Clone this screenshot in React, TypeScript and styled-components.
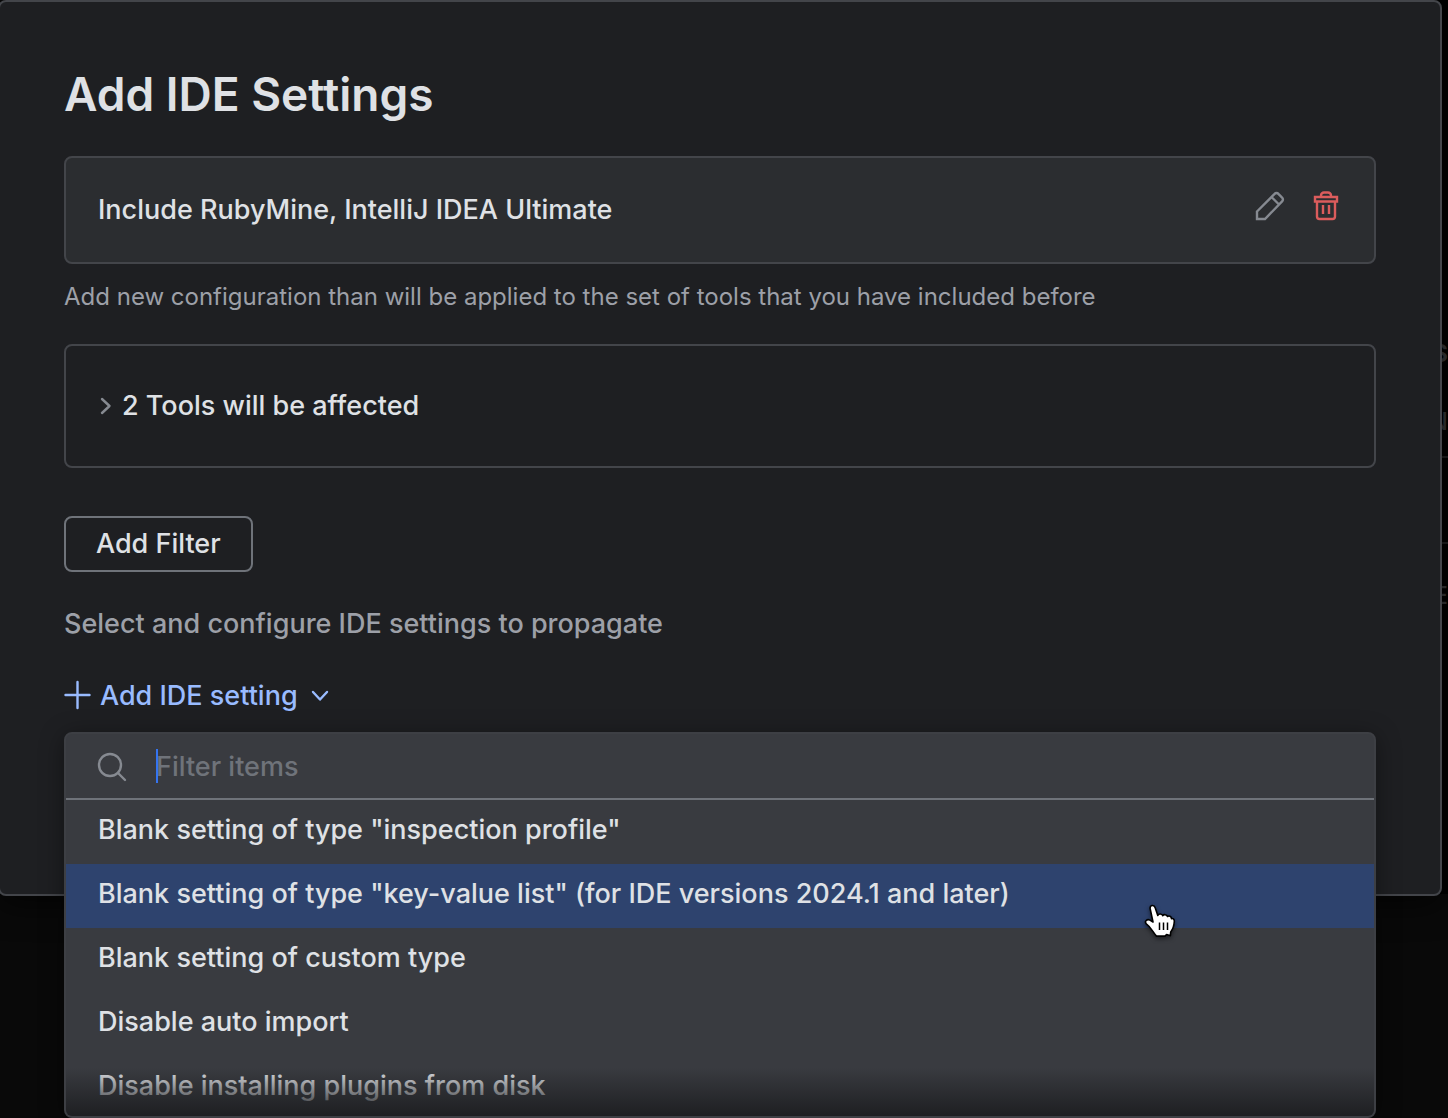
import React, { useState } from "react";
import styled, { createGlobalStyle } from "styled-components";

const GlobalStyle = createGlobalStyle`
  *, *::before, *::after { box-sizing: border-box; }
  html, body, #root { height: 100%; }
  body {
    margin: 0;
    background: #090909;
    color: #dfe1e5;
    font-family: Inter, "Liberation Sans", sans-serif;
    font-size: 27px;
    font-weight: 500;
    line-height: 40px;
    overflow: hidden;
  }
  button, input { font: inherit; color: inherit; }
`;

const Screen = styled.div`
  position: relative;
  min-height: 100%;
  overflow: hidden;
`;

const Behind = styled.div`
  position: absolute;
  inset: 0 0 auto auto;
  width: 18px;
  height: 894px;
  background: #000000;
  color: #343638;
  display: flex;
  flex-direction: column;
  align-items: flex-end;
  padding-top: 334px;
  overflow: hidden;
`;

const BehindLine = styled.div<{ $weight: number; $height: number }>`
  height: ${(p) => p.$height}px;
  font-size: 24px;
  font-weight: ${(p) => p.$weight};
  line-height: 40px;
`;

const BehindRule = styled.div<{ $height: number }>`
  width: 100%;
  height: ${(p) => p.$height}px;
  border-top: 2px solid #1e1f20;
`;

const Dialog = styled.main`
  position: relative;
  margin: 0 6px 0 -2px;
  height: 896px;
  padding: 60px 64px 0;
  background: #1e1f22;
  border: 2px solid #43454a;
  border-radius: 8px;
  box-shadow: 0 8px 32px rgba(0, 0, 0, 0.6);
`;

const Title = styled.h1`
  margin: 0;
  font-size: 46px;
  line-height: 64px;
  font-weight: 600;
`;

const FilterCard = styled.section`
  display: flex;
  align-items: center;
  justify-content: space-between;
  height: 108px;
  margin-top: 30px;
  padding: 0 32px;
  background: #2b2d30;
  border: 2px solid #43454a;
  border-radius: 8px;
`;

const Actions = styled.div`
  display: flex;
  gap: 24px;
  padding-bottom: 8px;
`;

const IconButton = styled.button<{ $color: string }>`
  display: flex;
  padding: 0;
  border: 0;
  background: none;
  color: ${(p) => p.$color};
`;

const Hint = styled.p`
  margin: 16px 0 0;
  color: #9da0a8;
  font-size: 24px;
  font-weight: 400;
  line-height: 34px;
`;

const ToolsCard = styled.section`
  display: flex;
  align-items: center;
  height: 124px;
  margin-top: 30px;
  padding: 0 32px;
  border: 2px solid #43454a;
  border-radius: 8px;
`;

const Disclosure = styled.button`
  display: flex;
  align-items: center;
  gap: 8px;
  padding: 0;
  border: 0;
  background: none;
`;

const OutlineButton = styled.button`
  display: block;
  height: 56px;
  margin-top: 48px;
  padding: 0 30px;
  border: 2px solid #6f737a;
  border-radius: 8px;
  background: none;
  line-height: 52px;
`;

const Label = styled.p`
  margin: 32px 0;
  color: #9da0a8;
`;

const LinkButton = styled.button`
  display: flex;
  align-items: center;
  gap: 8px;
  padding: 0;
  border: 0;
  background: none;
  color: #99bbff;
`;

const MenuAnchor = styled.div`
  position: relative;
`;

const Menu = styled.div`
  position: absolute;
  top: 100%;
  left: 0;
  right: 0;
  margin-top: 16px;
  height: 386px;
  overflow: hidden;
  background: #393b40;
  border: 2px solid #3d3f44;
  border-radius: 8px;
  box-shadow: 0 4px 24px rgba(0, 0, 0, 0.4);
`;

const SearchRow = styled.label`
  display: flex;
  align-items: center;
  gap: 28px;
  height: 66px;
  padding: 2px 30px 0;
  border-bottom: 2px solid #6f737a;
  color: #868a91;
`;

const SearchInput = styled.input`
  flex: 1;
  min-width: 0;
  height: 40px;
  padding: 0;
  border: 0;
  outline: 0;
  background: none;
  color: #dfe1e5;
  caret-color: transparent;
  &::placeholder { color: #6f737a; opacity: 1; }
`;

const Field = styled.div`
  position: relative;
  display: flex;
  flex: 1;
  &::before {
    content: "";
    position: absolute;
    left: 0;
    top: 2px;
    width: 2px;
    height: 34px;
    background: #3574f0;
  }
`;

const Options = styled.ul`
  margin: 0;
  padding: 0;
  list-style: none;
`;

const Option = styled.button<{ $active: boolean }>`
  display: block;
  width: 100%;
  height: 64px;
  padding: 0 32px 4px;
  border: 0;
  text-align: left;
  background: ${(p) => (p.$active ? "#2e436e" : "none")};
`;

const Fade = styled.div`
  position: absolute;
  left: 0;
  right: 0;
  bottom: 0;
  height: 48px;
  background: linear-gradient(rgba(30, 31, 34, 0), #1e1f22);
  pointer-events: none;
`;

const Pointer = styled.svg`
  position: absolute;
  right: 198px;
  top: 168px;
  filter: drop-shadow(0 2px 2px rgba(0, 0, 0, 0.5));
`;

const options = [
  'Blank setting of type "inspection profile"',
  'Blank setting of type "key-value list" (for IDE versions 2024.1 and later)',
  "Blank setting of custom type",
  "Disable auto import",
  "Disable installing plugins from disk",
];

const PencilIcon = () => (
  <svg width="32" height="32" viewBox="0 0 32 32" fill="none" stroke="currentColor" strokeWidth="2.4">
    <path d="M3 21.5 20.6 3.9a2.6 2.6 0 0 1 3.8 0l3.7 3.7a2.6 2.6 0 0 1 0 3.8L11 29H3z M17.5 7 25 14.5" />
  </svg>
);

const TrashIcon = () => (
  <svg width="32" height="32" viewBox="0 0 32 32" fill="none" stroke="currentColor" strokeWidth="2.4">
    <path d="M5 7h22v4.500H5zM7 11v15.5A2.5 2.5 0 0 0 9.500 29h13a2.500 2.500 0 0 0 2.500-2.500V11M11 7V5.500A3 3 0 0 1 14 2.500h4A3 3 0 0 1 21 5.500V7M13 15v9M19 15v9" />
  </svg>
);

const ChevronRight = () => (
  <svg width="16" height="20" viewBox="0 0 16 20" fill="none" stroke="#868a91" strokeWidth="2.4" strokeLinecap="round" strokeLinejoin="round">
    <path d="m4 3 7.500 7-7.500 7" />
  </svg>
);

const PlusIcon = () => (
  <svg width="28" height="32" viewBox="0 0 28 32" fill="none" stroke="currentColor" strokeWidth="2.4" strokeLinecap="round">
    <path d="M1.500 15h24M13.500 2v26" />
  </svg>
);

const ChevronDown = () => (
  <svg width="28" height="20" viewBox="0 0 28 20" fill="none" stroke="currentColor" strokeWidth="2.4" strokeLinecap="round" strokeLinejoin="round">
    <path d="m7 6 7 7.500 7-7.500" />
  </svg>
);

const SearchIcon = () => (
  <svg width="32" height="32" viewBox="0 0 32 32" fill="none" stroke="currentColor" strokeWidth="2.4" strokeLinecap="round">
    <circle cx="14" cy="14" r="11" />
    <path d="m22 22 7 7" />
  </svg>
);

export default function App() {
  const [query, setQuery] = useState("");
  const [active, setActive] = useState(1);

  return (
    <>
      <GlobalStyle />
      <Screen>
        <Behind aria-hidden="true">
          <BehindLine $weight={700} $height={68}>S</BehindLine>
          <BehindLine $weight={500} $height={54}>N</BehindLine>
          <BehindRule $height={86} />
          <BehindRule $height={34} />
          <BehindLine $weight={500} $height={40}>E</BehindLine>
        </Behind>
        <Dialog>
          <Title>Add IDE Settings</Title>
          <FilterCard>
            <span>Include RubyMine, IntelliJ IDEA Ultimate</span>
            <Actions>
              <IconButton type="button" aria-label="Edit" $color="#868a91"><PencilIcon /></IconButton>
              <IconButton type="button" aria-label="Delete" $color="#db5c5c"><TrashIcon /></IconButton>
            </Actions>
          </FilterCard>
          <Hint>Add new configuration than will be applied to the set of tools that you have included before</Hint>
          <ToolsCard>
            <Disclosure type="button" aria-expanded="false">
              <ChevronRight />
              2 Tools will be affected
            </Disclosure>
          </ToolsCard>
          <OutlineButton type="button">Add Filter</OutlineButton>
          <Label>Select and configure IDE settings to propagate</Label>
          <MenuAnchor>
            <LinkButton type="button" aria-expanded="true">
              <PlusIcon />
              Add IDE setting
              <ChevronDown />
            </LinkButton>
            <Menu>
              <SearchRow>
                <SearchIcon />
                <Field>
                  <SearchInput
                    aria-label="Filter items"
                    placeholder="Filter items"
                    value={query}
                    onChange={(e) => setQuery(e.target.value)}
                  />
                </Field>
              </SearchRow>
              <Options>
                {options.map((text, i) => (
                  <li key={text}>
                    <Option type="button" $active={i === active} onMouseEnter={() => setActive(i)}>{text}</Option>
                  </li>
                ))}
              </Options>
              <Fade />
              <Pointer width="32" height="36" viewBox="0 0 32 36" aria-hidden="true">
                <path
                  d="M9 20 6.200 7c-.8-3.800 3.800-5 5-1.200L13.800 13.500c.6-2.200 4.200-2 5 .2.900-1.600 4-1.400 4.700.8 1.400-1 4-.2 4 2.200 1.200-.7 3 .2 2.800 2.800-.3 5.500-1 7.200-3.600 10.400l-.3 3.800-3.800-1.200-1.600 1.600H12.500c-3.600-3.800-5.200-8.600-10.200-12.200-2.200-2.400.8-5.400 3.600-3.800z"
                  fill="#fff" stroke="#000" strokeWidth="1.600" strokeLinejoin="round"
                />
                <path d="M15.500 20.500v7.500M19.500 20.500v7.500M23.500 20.500v7.500" stroke="#000" strokeWidth="1.500" />
              </Pointer>
            </Menu>
          </MenuAnchor>
        </Dialog>
      </Screen>
    </>
  );
}
